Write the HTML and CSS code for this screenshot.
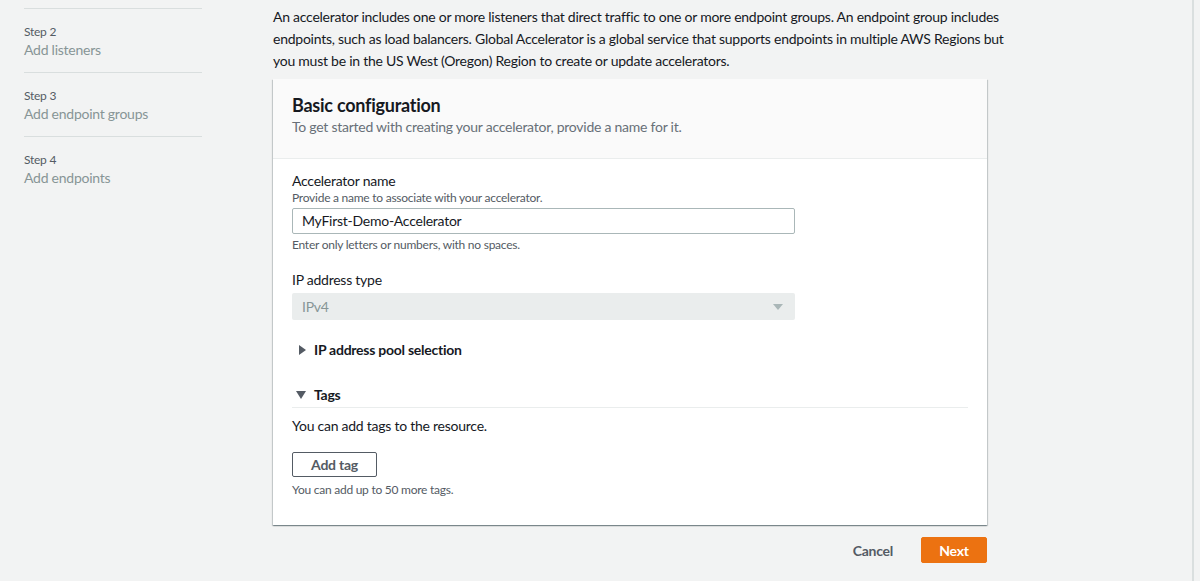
FILE: index.html
```html
<!DOCTYPE html>
<html lang="en">
<head>
<meta charset="utf-8">
<title>Create accelerator</title>
<link rel="stylesheet" href="styles.css">
</head>
<body>
<div class="page">
  <nav class="steps">
    <div class="step">
      <div class="step-num">Step 2</div>
      <div class="step-title">Add listeners</div>
    </div>
    <div class="step">
      <div class="step-num">Step 3</div>
      <div class="step-title">Add endpoint groups</div>
    </div>
    <div class="step">
      <div class="step-num">Step 4</div>
      <div class="step-title">Add endpoints</div>
    </div>
  </nav>
  <main class="main">
    <p class="intro">An accelerator includes one or more listeners that direct traffic to one or more endpoint groups. An endpoint group includes endpoints, such as load balancers. Global Accelerator is a global service that supports endpoints in multiple AWS Regions but you must be in the US West (Oregon) Region to create or update accelerators.</p>
    <section class="panel">
      <header class="panel-header">
        <h2 class="panel-title">Basic configuration</h2>
        <p class="panel-desc">To get started with creating your accelerator, provide a name for it.</p>
      </header>
      <div class="panel-body">
        <div class="field">
          <div class="label">Accelerator name</div>
          <div class="desc">Provide a name to associate with your accelerator.</div>
          <div class="input">MyFirst-Demo-Accelerator</div>
          <div class="hint">Enter only letters or numbers, with no spaces.</div>
        </div>
        <div class="field field-ip">
          <div class="label">IP address type</div>
          <div class="select">
            <span>IPv4</span>
            <svg class="caret" width="10" height="6" viewBox="0 0 10 6"><path d="M0 0h10L5 6z" fill="#aab7b8"/></svg>
          </div>
        </div>
        <div class="expander expander-pool">
          <svg class="tri" width="8" height="10" viewBox="0 0 8 10"><path d="M1 0l7 5-7 5z" fill="#545b64"/></svg>
          <span>IP address pool selection</span>
        </div>
        <div class="expander expander-tags">
          <svg class="tri" width="10" height="8" viewBox="0 0 10 8"><path d="M0 0h10L5 8z" fill="#545b64"/></svg>
          <span>Tags</span>
        </div>
        <div class="tags-body">
          <p class="tags-text">You can add tags to the resource.</p>
          <button class="btn-normal">Add tag</button>
          <div class="hint">You can add up to 50 more tags.</div>
        </div>
      </div>
    </section>
    <div class="actions">
      <button class="btn-link">Cancel</button>
      <button class="btn-primary">Next</button>
    </div>
  </main>
</div>
</body>
</html>
```

FILE: styles.css
```css
html, body {
  margin: 0;
  padding: 0;
  background: #f2f3f3;
}
body {
  font-family: Lato, "Liberation Sans", sans-serif;
  color: #16191f;
  font-size: 14px;
  letter-spacing: -0.25px;
}
.page {
  display: flex;
  width: 1194px;
  height: 581px;
  padding-left: 24px;
  box-sizing: border-box;
  border-right: 2px solid #dadfdf;
  overflow: hidden;
}
.steps {
  width: 178px;
  margin-right: 71px;
  padding-top: 8px;
  flex: none;
}
.step {
  border-top: 1px solid #d9dede;
  padding: 15px 0 12px;
  height: 36px;
}
.step-num {
  font-size: 12px;
  line-height: 16px;
  color: #545b64;
}
.step-title {
  font-size: 14px;
  line-height: 20px;
  color: #879596;
}
.main {
  width: 714px;
  flex: none;
  padding-top: 6px;
}
.intro {
  margin: 0 0 7px;
  width: 740px;
  line-height: 22px;
}
.panel {
  background: #fff;
  box-shadow: 0 1px 1px 0 rgba(0, 28, 36, 0.3), 1px 1px 1px 0 rgba(0, 28, 36, 0.15), -1px 1px 1px 0 rgba(0, 28, 36, 0.15);
}
.panel-header {
  background: #fafafa;
  border-bottom: 1px solid #eaeded;
  padding: 14px 19px 21px;
}
.panel-title {
  margin: 0;
  font-size: 18px;
  line-height: 24px;
  font-weight: 700;
}
.panel-desc {
  margin: 0;
  line-height: 20px;
  color: #687078;
}
.panel-body {
  padding: 13px 19px 27px;
}
.label {
  line-height: 18px;
}
.desc, .hint {
  font-size: 12px;
  line-height: 16px;
  color: #545b64;
}
.input {
  margin-top: 2px;
  width: 503px;
  height: 26px;
  box-sizing: border-box;
  border: 1px solid #aab7b8;
  border-radius: 2px;
  padding: 0 9px;
  line-height: 24px;
}
.field .hint {
  margin-top: 3px;
}
.field-ip {
  margin-top: 18px;
}
.field-ip .label {
  margin-bottom: 4px;
}
.select {
  width: 503px;
  height: 27px;
  box-sizing: border-box;
  background: #eaeded;
  border-radius: 2px;
  padding: 0 12px 0 10px;
  display: flex;
  align-items: center;
  justify-content: space-between;
  color: #879596;
}
.expander {
  display: flex;
  align-items: center;
  font-weight: 700;
  line-height: 20px;
}
.expander-pool {
  margin-top: 20px;
  padding-left: 6px;
}
.expander-pool .tri {
  margin-right: 8px;
}
.expander-tags {
  margin-top: 25px;
  padding: 0 0 2px 4px;
  border-bottom: 1px solid #eaeded;
}
.expander-tags .tri {
  margin-right: 8px;
}
.tags-text {
  margin: 8px 0 0;
  line-height: 20px;
}
.btn-normal {
  margin-top: 16px;
  font-family: inherit;
  font-size: 14px;
  font-weight: 700;
  letter-spacing: inherit;
  color: #545b64;
  background: #fff;
  border: 1px solid #545b64;
  border-radius: 2px;
  width: 85px;
  height: 25px;
  padding: 0;
  display: block;
}
.tags-body .hint {
  margin-top: 5px;
}
.actions {
  display: flex;
  justify-content: flex-end;
  align-items: center;
  margin-top: 12px;
}
.btn-link {
  font-family: inherit;
  font-size: 14px;
  font-weight: 700;
  letter-spacing: inherit;
  color: #545b64;
  background: none;
  border: none;
  padding: 0 20px;
  height: 26px;
  margin-right: 8px;
}
.btn-primary {
  font-family: inherit;
  font-size: 14px;
  font-weight: 700;
  letter-spacing: inherit;
  color: #fff;
  background: #ec7211;
  border: 1px solid #ec7211;
  border-radius: 2px;
  width: 66px;
  height: 26px;
  padding: 0;
}
```
